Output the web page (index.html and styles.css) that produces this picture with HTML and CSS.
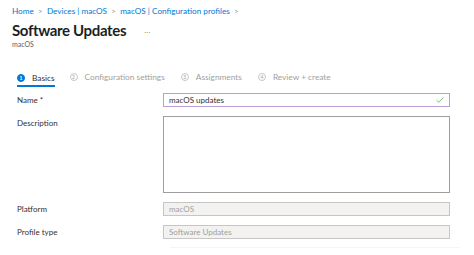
FILE: index.html
```html
<!DOCTYPE html>
<html>
<head>
<meta charset="utf-8">
<link rel="stylesheet" href="styles.css">
</head>
<body>
<div class="page">
  <nav class="crumbs">
    <a>Home</a><span class="chev">&gt;</span><a>Devices | macOS</a><span class="chev">&gt;</span><a>macOS | Configuration profiles</a><span class="chev">&gt;</span>
  </nav>
  <div class="titlerow">
    <h1>Software Updates</h1><span class="more">...</span>
  </div>
  <div class="sub">macOS</div>
  <div class="steps">
    <div class="step active"><span class="num">1</span><span class="lbl">Basics</span></div>
    <div class="step"><span class="num">2</span><span class="lbl">Configuration settings</span></div>
    <div class="step"><span class="num">3</span><span class="lbl">Assignments</span></div>
    <div class="step"><span class="num">4</span><span class="lbl">Review + create</span></div>
  </div>
  <div class="form">
    <div class="row">
      <div class="label">Name *</div>
      <div class="input focus">macOS updates
        <svg class="check" width="8" height="6" viewBox="0 0 8 6"><path d="M0.5 3.2 L2.8 5.3 L7.5 0.6" fill="none" stroke="#6bb36b" stroke-width="0.9"/></svg>
      </div>
    </div>
    <div class="row">
      <div class="label">Description</div>
      <div class="textarea"></div>
    </div>
    <div class="row">
      <div class="label">Platform</div>
      <div class="input disabled">macOS</div>
    </div>
    <div class="row">
      <div class="label">Profile type</div>
      <div class="input disabled">Software Updates</div>
    </div>
  </div>
  <div class="footline"></div>
</div>
</body>
</html>
```
FILE: styles.css
```css
* { box-sizing: border-box; }
html, body { margin: 0; padding: 0; background: #fff; }
body { font-family: "Lato", "Noto Sans", sans-serif; color: #323130; width: 474px; height: 255px; overflow: hidden; }
.page { padding: 5px 0 0 12px; }
.crumbs { font-size: 8.2px; color: #0078d4; height: 12px; line-height: 12px; display: flex; align-items: center; }
.crumbs a { color: #0078d4; }
.chev { color: #8a8886; margin: 0 4.5px; font-size: 7px; }
.titlerow { display: flex; align-items: center; margin-top: 3px; height: 20px; }
h1 { margin: 0; font-size: 15px; font-weight: 700; letter-spacing: -0.35px; color: #201f1e; line-height: 20px; }
.more { margin-left: 18px; color: #8a8886; font-size: 8px; letter-spacing: 0.3px; line-height: 8px; }
.sub { font-size: 7px; color: #605e5c; margin-top: -1px; line-height: 10px; }
.steps { display: flex; margin-top: 21px; padding-left: 5px; height: 22px; }
.step { display: flex; align-items: center; height: 14px; margin-right: 16px; color: #a19f9d; font-size: 8.3px; }
.step .num { width: 8px; height: 8px; border-radius: 50%; border: 0.8px solid #c8c6c4; font-size: 5px; display: flex; align-items: center; justify-content: center; margin-right: 7px; color: #a19f9d; }
.step.active { color: #323130; border-bottom: 2px solid #0078d4; height: 17px; padding-top: 1px; margin-right: 15px; }
.step.active .num { background: #0078d4; border-color: #0078d4; color: #fff; font-weight: 700; }
.form { padding-left: 5px; margin-top: 1px; display: flex; flex-direction: column; gap: 9px; }
.row { display: flex; }
.label { width: 146px; font-size: 8px; line-height: 14px; color: #323130; }
.input { width: 287px; height: 14px; border: 1px solid #8a8886; font-size: 8px; line-height: 12px; padding-left: 5px; position: relative; }
.input.focus { border-color: #b79fd6; color: #323130; }
.check { position: absolute; right: 5px; top: 3px; }
.textarea { width: 287px; height: 77px; border: 1px solid #a19f9d; }
.input.disabled { background: #f3f2f1; border-color: #c8c6c4; color: #a19f9d; }
.footline { margin: 8px 0 0 158px; width: 290px; height: 1px; background: #f5f5f5; }
```
